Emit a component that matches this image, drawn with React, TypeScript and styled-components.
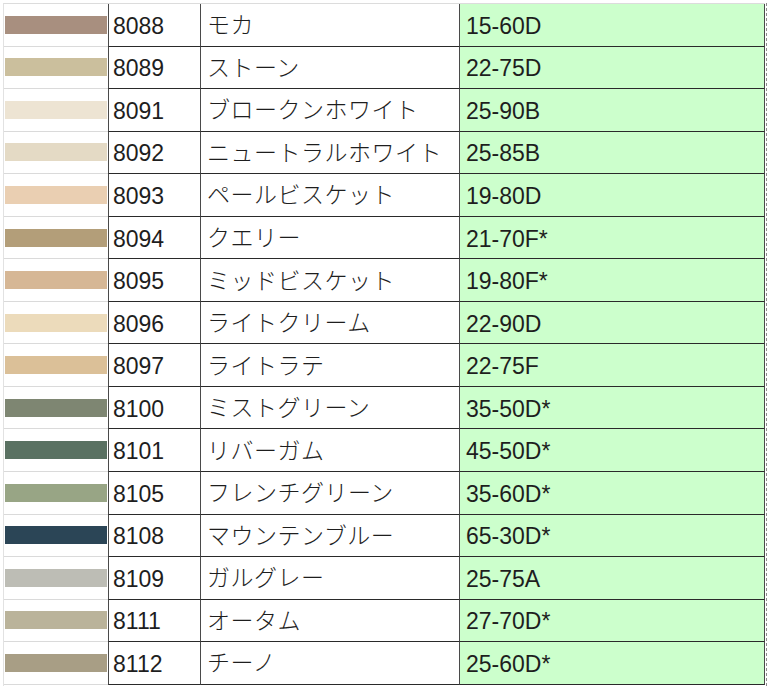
import React from "react";
import styled, { createGlobalStyle } from "styled-components";

interface PaintRow {
  code: string;
  name: string;
  munsell: string;
  color: string;
}

const rows: PaintRow[] = [
  { code: "8088", name: "モカ", munsell: "15-60D", color: "#a88f7f" },
  { code: "8089", name: "ストーン", munsell: "22-75D", color: "#cbbf9d" },
  { code: "8091", name: "ブロークンホワイト", munsell: "25-90B", color: "#ede4d3" },
  { code: "8092", name: "ニュートラルホワイト", munsell: "25-85B", color: "#e4dac5" },
  { code: "8093", name: "ペールビスケット", munsell: "19-80D", color: "#eacfb2" },
  { code: "8094", name: "クエリー", munsell: "21-70F*", color: "#b39e79" },
  { code: "8095", name: "ミッドビスケット", munsell: "19-80F*", color: "#d6b795" },
  { code: "8096", name: "ライトクリーム", munsell: "22-90D", color: "#ecdbbb" },
  { code: "8097", name: "ライトラテ", munsell: "22-75F", color: "#dbc098" },
  { code: "8100", name: "ミストグリーン", munsell: "35-50D*", color: "#7e8672" },
  { code: "8101", name: "リバーガム", munsell: "45-50D*", color: "#5a7162" },
  { code: "8105", name: "フレンチグリーン", munsell: "35-60D*", color: "#98a585" },
  { code: "8108", name: "マウンテンブルー", munsell: "65-30D*", color: "#2b4556" },
  { code: "8109", name: "ガルグレー", munsell: "25-75A", color: "#bdbdb5" },
  { code: "8111", name: "オータム", munsell: "27-70D*", color: "#bab39a" },
  { code: "8112", name: "チーノ", munsell: "25-60D*", color: "#a89e85" },
];

const GlobalStyle = createGlobalStyle`
  html, body {
    margin: 0;
    padding: 0;
    background: #ffffff;
  }
  body {
    font-family: "Liberation Sans", "Noto Sans CJK JP", sans-serif;
    color: #1e1e1e;
  }
`;

const Sheet = styled.div`
  width: 768px;
  height: 686px;
  padding: 3px 0 0 3px;
  box-sizing: border-box;
  overflow: hidden;
  display: flex;
`;

const PrintArea = styled.div`
  display: flex;
  padding-right: 1px;
  border-right: 1px dashed #8a8a8a;
  height: 683px;
`;

const Table = styled.div`
  display: flex;
  flex-direction: column;
  border-top: 1px solid #dcdcdc;
  border-left: 1px solid #e2e2e2;
`;

const Row = styled.div`
  display: grid;
  grid-template-columns: 104px 92px 259px 306px;
  height: 42.56px;
`;

const SwatchCell = styled.div`
  display: flex;
  align-items: center;
  padding-left: 1px;
  border-bottom: 1px solid #dadada;
`;

const Swatch = styled.div<{ $color: string }>`
  width: 102px;
  height: 18px;
  background: ${({ $color }) => $color};
`;

const Cell = styled.div<{ $green?: boolean; $jp?: boolean }>`
  display: flex;
  align-items: center;
  box-sizing: border-box;
  border-left: 1px solid #4a4a4a;
  border-bottom: 1px solid #2a2a2a;
  border-right: ${({ $green }) => ($green ? "1px solid #4a4a4a" : "none")};
  background: ${({ $green }) => ($green ? "#ccffcc" : "transparent")};
  padding-left: ${({ $jp, $green }) => ($jp ? "6px" : $green ? "6px" : "4px")};
  padding-top: ${({ $jp }) => ($jp ? "0" : "3px")};
  padding-bottom: ${({ $jp }) => ($jp ? "2px" : "0")};
  font-family: ${({ $jp }) =>
    $jp
      ? '"Noto Sans CJK JP", sans-serif'
      : '"Liberation Sans", Arial, sans-serif'};
  font-size: 23px;
  line-height: 1;
  letter-spacing: ${({ $jp }) => ($jp ? "0.5px" : "0")};
  font-weight: ${({ $jp }) => ($jp ? 300 : 400)};
  white-space: nowrap;
`;

const App: React.FC = () => {
  return (
    <>
      <GlobalStyle />
      <Sheet>
        <PrintArea>
          <Table>
            {rows.map((r) => (
              <Row key={r.code}>
                <SwatchCell>
                  <Swatch $color={r.color} />
                </SwatchCell>
                <Cell>{r.code}</Cell>
                <Cell $jp>{r.name}</Cell>
                <Cell $green>{r.munsell}</Cell>
              </Row>
            ))}
          </Table>
        </PrintArea>
      </Sheet>
    </>
  );
};

export default App;
